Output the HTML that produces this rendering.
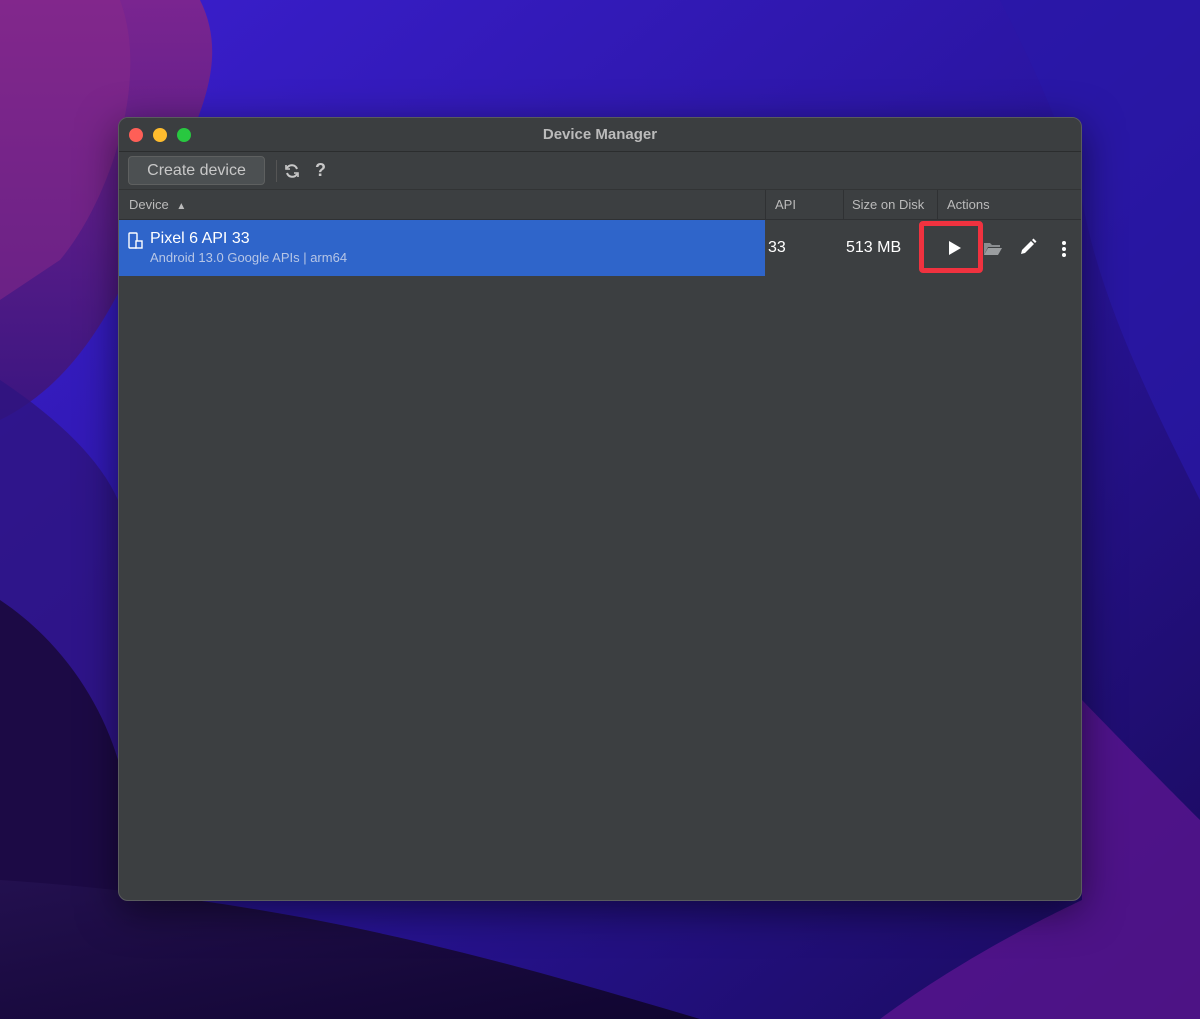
<!DOCTYPE html>
<html><head><meta charset="utf-8"><style>
*{margin:0;padding:0;box-sizing:border-box}
body{width:1200px;height:1019px;overflow:hidden;position:relative;font-family:"Liberation Sans",sans-serif;background:#2a1590}
.bg{position:absolute;left:0;top:0}
.win{position:absolute;left:118px;top:117px;width:964px;height:784px;background:#3c3f41;border-radius:10px;border:1px solid #5a5c5e;overflow:hidden;box-shadow:0 10px 40px rgba(0,0,0,.5)}
.title{height:34px;background:#3b3e40;border-bottom:1px solid #2b2d2e;text-align:center;line-height:33px;color:#bbbbbb;font-weight:bold;font-size:15px;position:relative}
.dot{position:absolute;top:10px;width:14px;height:14px;border-radius:50%}
.tb{height:38px;border-bottom:1px solid #323435;position:relative}
.btn{position:absolute;left:9px;top:4px;width:137px;height:29px;border:1px solid #5e6060;border-radius:4px;background:#4c5052;color:#c8c8c8;font-size:16px;text-align:center;line-height:27px}
.hdr{height:30px;background:#3c3f41;border-bottom:1px solid #2f3133;position:relative;color:#bbbbbb;font-size:13px}
.hdr span{position:absolute;top:7px}
.sep{position:absolute;top:0;width:1px;height:30px;background:#2f3133}
.row{position:absolute;top:102px;left:0;width:646px;height:56px;background:#2f65ca}
.t{position:absolute;color:#fff}
</style></head><body>
<svg class="bg" width="1200" height="1019" viewBox="0 0 1200 1019">
<defs>
<linearGradient id="g1" x1="0" y1="0" x2="1" y2="1"><stop offset="0" stop-color="#3b1fd0"/><stop offset="0.5" stop-color="#2a15a0"/><stop offset="1" stop-color="#1a0a5a"/></linearGradient>
<linearGradient id="g2" x1="0" y1="0" x2="0" y2="1"><stop offset="0" stop-color="#7a2590"/><stop offset="1" stop-color="#3a1580"/></linearGradient>
<linearGradient id="g3" x1="0" y1="0" x2="1" y2="1"><stop offset="0" stop-color="#23104f"/><stop offset="1" stop-color="#100530"/></linearGradient>
</defs>
<rect width="1200" height="1019" fill="url(#g1)"/>
<path d="M0 0 H200 C230 60 200 120 160 200 C120 300 80 380 0 420Z" fill="url(#g2)"/>
<path d="M0 0 H120 C150 80 110 200 60 260 L0 300Z" fill="#8a2a88" opacity=".5"/>
<path d="M0 380 C60 420 100 460 118 500 L118 1019 H0Z" fill="#2e1480" opacity=".8"/>
<path d="M0 600 C60 640 100 700 118 760 L118 1019 H0Z" fill="#1c0a45"/>
<path d="M0 880 C300 900 500 960 700 1019 H0Z" fill="url(#g3)"/>
<path d="M1082 700 C1140 760 1180 800 1200 820 V1019 H880 C960 960 1040 920 1082 900Z" fill="#5a1590" opacity=".8"/>
<path d="M1000 0 H1200 V500 C1150 400 1100 300 1082 200 C1060 120 1030 60 1000 0Z" fill="#2a18a8" opacity=".7"/>
</svg>
<div class="win">
<div class="title">Device Manager
<div class="dot" style="left:10px;background:#fe5f57"></div>
<div class="dot" style="left:34px;background:#febc2e"></div>
<div class="dot" style="left:58px;background:#28c840"></div>
</div>
<div class="tb"><div class="btn">Create device</div>
<div style="position:absolute;left:157px;top:8px;width:1px;height:22px;background:#555"></div>
<svg style="position:absolute;left:165px;top:11px" width="16" height="16" viewBox="0 0 16 16" fill="none" stroke="#c8c8c8" stroke-width="2"><path d="M13 6A5.5 5.5 0 0 0 3 5"/><path d="M3 10A5.5 5.5 0 0 0 13 11"/><path d="M2 2v4h4M14 14v-4h-4" stroke-width="1.6"/></svg>
<span style="position:absolute;left:196px;top:8px;color:#c8c8c8;font-size:18px;font-weight:bold">?</span>
</div>
<div class="hdr"><span style="left:10px">Device <span style="position:static;font-size:10px;margin-left:4px">▲</span></span>
<div class="sep" style="left:646px"></div><span style="left:656px">API</span>
<div class="sep" style="left:724px"></div><span style="left:733px">Size on Disk</span>
<div class="sep" style="left:818px"></div><span style="left:828px">Actions</span></div>
<div class="row">
<svg style="position:absolute;left:9px;top:12px" width="16" height="18" viewBox="0 0 16 18" fill="none" stroke="#fff" stroke-width="1.4"><rect x="1" y="1" width="8" height="15" rx="1"/><rect x="8" y="9" width="6" height="7" fill="#2f65ca"/></svg>
<span class="t" style="left:31px;top:10px;font-size:16px">Pixel 6 API 33</span>
<span class="t" style="left:31px;top:30px;font-size:13px;color:#b7c6e6">Android 13.0 Google APIs | arm64</span>
</div>
<span class="t" style="left:649px;top:121px;font-size:16px">33</span>
<span class="t" style="left:727px;top:121px;font-size:16px">513 MB</span>
<div style="position:absolute;left:800px;top:103px;width:64px;height:52px;border:5px solid #f0323f;border-radius:4px"></div>
<svg style="position:absolute;left:829px;top:122px" width="14" height="16"><path d="M1 1L13 8L1 15Z" fill="#fff"/></svg>
<svg style="position:absolute;left:864px;top:122px" width="20" height="16"><path d="M1 3h6l2 2h8v2H5l-4 8Z" fill="#8a8d90"/><path d="M5 8h14l-4 7H1Z" fill="#9a9d9f"/></svg>
<svg style="position:absolute;left:900px;top:120px" width="18" height="18"><path d="M2 16l1-4L12 3l3 3-9 9Z M13 2l1.5-1.5 3 3L16 5Z" fill="#fff"/></svg>
<div style="position:absolute;left:943px;top:123px;width:4px;height:4px;border-radius:50%;background:#fff;box-shadow:0 6px 0 #fff,0 12px 0 #fff"></div>
</div>
</body></html>
